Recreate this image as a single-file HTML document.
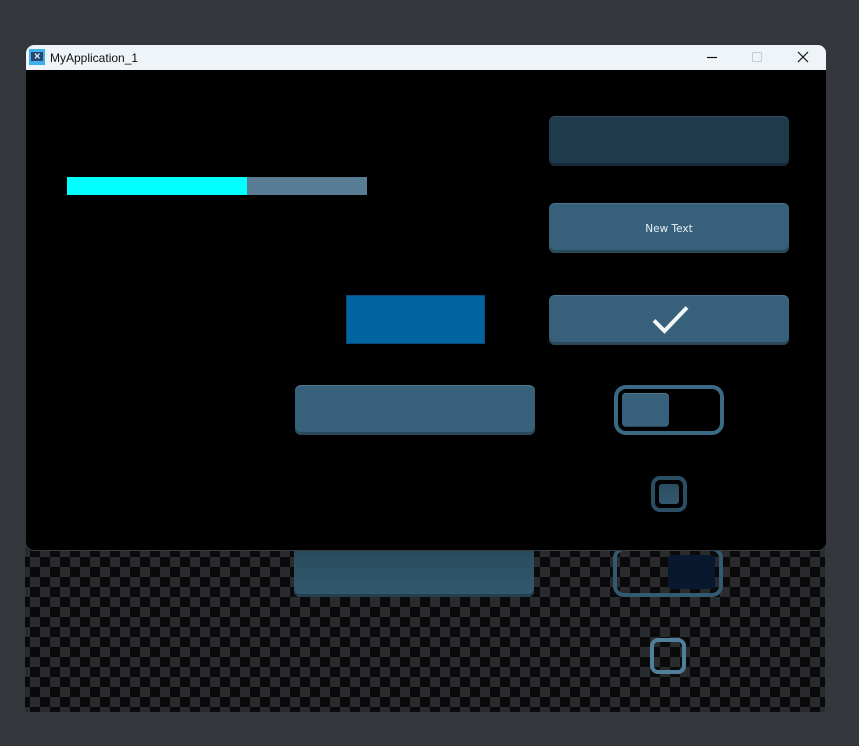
<!DOCTYPE html>
<html><head><meta charset="utf-8"><style>
html,body{margin:0;padding:0;width:859px;height:746px;overflow:hidden;background:#33363b}
div{position:absolute;box-sizing:border-box}
.btn{border-radius:6px;background:#37607a;box-shadow:inset 0 1px 0 #4c748b,inset 0 -3px 0 #2a4a5c}
</style></head><body>
<div style="left:25px;top:547px;width:800px;height:165px;background-color:#0a0a0b;background-image:conic-gradient(#2a2b2e 25%,#0a0a0b 0 50%,#2a2b2e 0 75%,#0a0a0b 0);background-size:20px 20px;background-position:5px 0"></div>

<!-- below window -->
<div style="left:294px;top:548px;width:240px;height:49px;border-radius:0 0 6px 6px;background:linear-gradient(#2a4a5c,#315a70);box-shadow:inset 0 -3px 0 #24404f"></div>
<div style="left:613px;top:547px;width:110px;height:50px;border:4px solid #325a72;border-radius:11px"></div>
<div style="left:668px;top:555px;width:47px;height:34px;border-radius:4px;background:#08182f"></div>
<div style="left:650px;top:638px;width:36px;height:36px;border:4px solid #4f7f9b;border-radius:8px"></div>

<!-- window -->
<div style="left:26px;top:45px;width:800px;height:505px;border-radius:8px;background:#000;overflow:hidden;box-shadow:0 1px 0 #3a3c40">
  <div style="left:0;top:0;width:800px;height:25px;background:#eff4f9"></div>
  <div style="left:24px;top:5px;font:12px/17px 'Liberation Sans',sans-serif;color:#111">MyApplication_1</div>
</div>

<svg style="position:absolute;left:0;top:0" width="859" height="746" viewBox="0 0 859 746">
  <rect x="29" y="49" width="16" height="16" fill="#3fb0ee"/>
  <rect x="31" y="52" width="12" height="9" fill="#27486e"/>
  <path d="M35 53.5l2 2.5-2 2.5M39.5 53.5l-2 2.5 2 2.5" stroke="#e6f5ff" stroke-width="1.2" fill="none"/>
  <path d="M707 57.5h10" stroke="#111" stroke-width="1.2"/>
  <rect x="752.5" y="52.5" width="9" height="9" rx="1" fill="none" stroke="#c6cacf"/>
  <path d="M798 52l10 10M808 52l-10 10" stroke="#111" stroke-width="1.2"/>
  <rect x="67" y="177" width="180" height="18" fill="#00ffff"/>
  <rect x="247" y="177" width="120" height="18" fill="#587c94"/>
</svg>

<div class="btn" style="left:549px;top:116px;width:240px;height:50px;background:#1f3a4b;box-shadow:inset 0 1px 0 #2f4c5e,inset 0 -3px 0 #162b37"></div>
<div class="btn" style="left:549px;top:203px;width:240px;height:50px;text-align:center;font:10.5px/50px 'DejaVu Sans','Liberation Sans',sans-serif;color:#e8f0f5"><span style="position:relative;top:1px">New Text</span></div>
<div class="btn" style="left:549px;top:295px;width:240px;height:50px"></div>
<div class="btn" style="left:295px;top:385px;width:240px;height:50px"></div>
<div style="left:346px;top:295px;width:139px;height:49px;background:#0064a0;border:1px solid #0a4a80"></div>

<div style="left:614px;top:385px;width:110px;height:50px;border:4px solid #3b6a85;border-radius:12px"></div>
<div style="left:622px;top:393px;width:47px;height:34px;border-radius:4px;background:#37607a;box-shadow:inset 0 1px 0 #4c748b,inset 0 -1px 0 #2a4a5c"></div>
<div style="left:651px;top:476px;width:36px;height:36px;border:4px solid #2a4e64;border-radius:9px"></div>
<div style="left:659px;top:484px;width:20px;height:20px;border-radius:3px;background:linear-gradient(#2a4d62,#33586f)"></div>

<svg style="position:absolute;left:0;top:0" width="859" height="746" viewBox="0 0 859 746">
  <path d="M654 320.5l10.5 10.5L687 307.5" fill="none" stroke="#f2f7fa" stroke-width="4"/>
</svg>
</body></html>
